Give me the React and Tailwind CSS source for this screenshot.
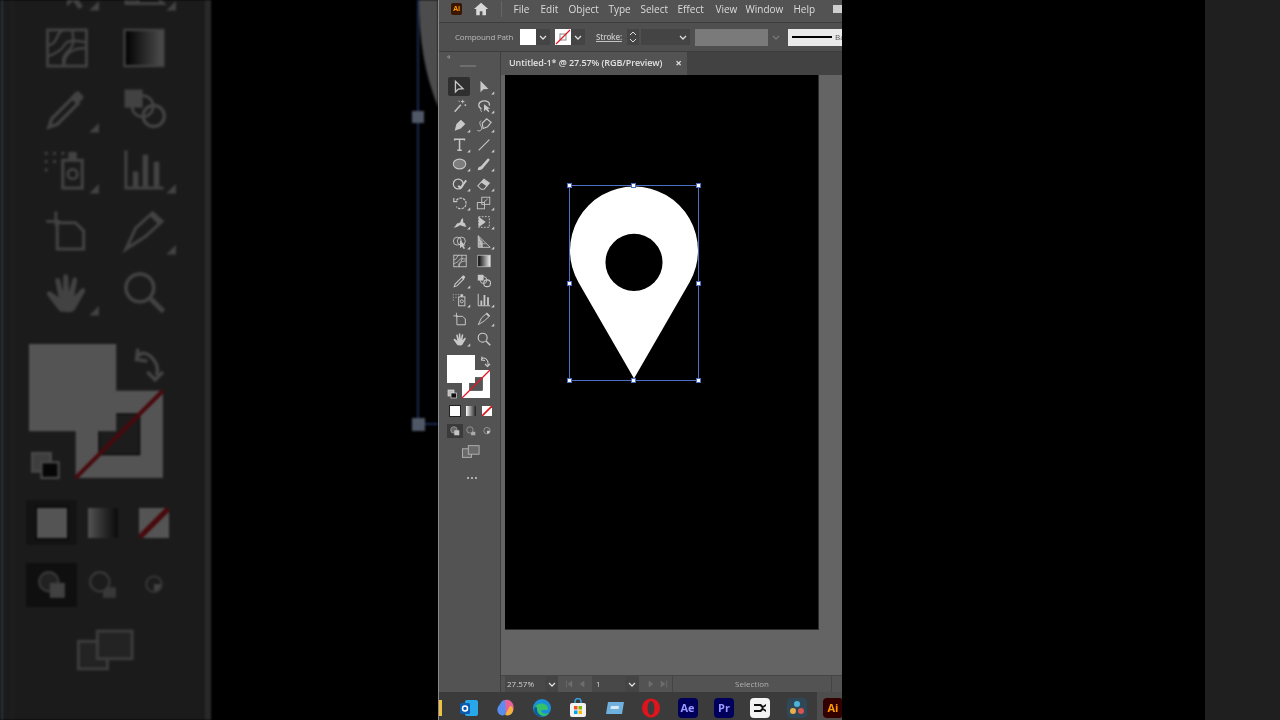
import React from 'react';

const Corner = () => <path d="M20.500 14v3.500H17z" fill="currentColor" stroke="none" />;

// tool icons, drawn on an 18x18 box
const icons = {
  select: <path d="M5 2.500v12l3.200-3.200 5.300-.4z" fill="none" strokeWidth="1.500" />,
  direct: <><path d="M5 2v13l3.400-3.400 5.600-.3z" fill="currentColor" stroke="none" /><Corner /></>,
  wand: <><path d="M3 15.500 10 7.500" strokeWidth="1.600" /><path d="M12 2v4M10 4h4M15 7v2M14 8h2M8 3v1.500" strokeWidth="1" /></>,
  lasso: <><path d="M6 12C2 10 2 5 7 3.500c5-1 9 1 8 5" fill="none" strokeWidth="1.400" /><path d="M6 12c-1 1-1 3 .5 3.500" fill="none" /><path d="M9 7v8l2-2 3 3 1-1-2-3h3z" fill="currentColor" stroke="none" /><Corner /></>,
  pen: <><path d="M3 15.500 5 8l5-5 5 5-5 5z" fill="currentColor" stroke="none" /><Corner /></>,
  curve: <><path d="M1.500 15c3 2 6-1 4.500-4S3 6 6 4" fill="none" /><path d="M8 13 7 7l5-5 5 4-4 5z" fill="none" strokeWidth="1.300" /><Corner /></>,
  type: <><path d="M3 4V2.500h11V4M8.500 2.500V15M6 15h5" fill="none" strokeWidth="1.700" /><Corner /></>,
  line: <><path d="M3 15 15 3" strokeWidth="1.200" /><Corner /></>,
  ellipse: <><ellipse cx="8.500" cy="9" rx="7" ry="5.500" fill="#7d7d7d" strokeWidth="1.200" /><Corner /></>,
  brush: <><path d="M2 16c0-3 1-4 3.500-4.500L13 3c1-1 3 .5 2 2l-7 8.500C7 15.500 5 16 2 16z" fill="currentColor" stroke="none" /><Corner /></>,
  shaper: <><circle cx="7" cy="9" r="5.500" fill="none" strokeWidth="1.400" /><path d="M7 11l2.500 2.500L16 5" fill="none" strokeWidth="2.200" /><Corner /></>,
  eraser: <><path d="m2 11 7-7.500 6 4.500-6 7H6z" fill="none" strokeWidth="1.200" /><path d="m8.500 4 6.500 4-3 3.500-6.500-4.500z" fill="currentColor" stroke="none" /><Corner /></>,
  rotate: <><path d="M5 6A6 6 0 1 1 5 13" fill="none" strokeDasharray="3 1" strokeWidth="1.300" /><path d="M2 3.500v4h4" fill="none" strokeWidth="1.300" /><Corner /></>,
  scale: <><rect x="1.500" y="8.500" width="8" height="7" fill="none" /><rect x="6.500" y="2.500" width="9" height="8" fill="none" /><path d="m9 8 4-3.500" /><Corner /></>,
  warp: <><path d="M1.500 15c3-1 3-5 6-5s2-4 4-5 0 5 2 5 1 3 3 4c-5 1-6-2-8-1s-4 3-7 2z" fill="currentColor" stroke="none" /><Corner /></>,
  free: <><path d="M3 3h12v12H3z" fill="none" strokeDasharray="2 1.500" /><path d="M3 3 11 9l-8 6z" fill="currentColor" stroke="none" /><Corner /></>,
  builder: <><circle cx="6" cy="8" r="4.500" fill="none" /><circle cx="10.500" cy="8" r="4.500" fill="none" /><path d="M9 7v9l2.200-2 2 3 1.500-1-2-3H15z" fill="currentColor" stroke="none" /><Corner /></>,
  perspective: <><path d="M2.500 2v13H16L2.500 2z" fill="none" /><path d="M2.500 7 7 8.500V15M2.500 11H11M2.500 2 7 15" fill="none" strokeWidth=".8" /><path d="M2.500 2 7 8.500V15H2.500z" fill="currentColor" stroke="none" opacity=".7" /><Corner /></>,
  mesh: <><rect x="2" y="2.500" width="14" height="13" fill="none" /><path d="M2 8c4 0 3-5.500 6-5.500M8 15c0-4 3-6 8-6M2 12c3-1 5-2 6-4s4-2 8-1M11 2.500c0 3 1 5-1 7s-3 3-2 6" fill="none" strokeWidth=".9" /></>,
  gradient: <><defs><linearGradient id="toolgrad"><stop offset="0" stopColor="#000" /><stop offset="1" stopColor="#eee" /></linearGradient></defs><rect x="2" y="2.500" width="14" height="13" fill="url(#toolgrad)" strokeWidth=".8" /></>,
  dropper: <><path d="m2.500 15.500 1-3L11 5l2 2-7.500 7.500z" fill="none" strokeWidth="1.200" /><path d="m10.500 4.500 1.500-1.500 1-.5 2 2-.5 1-1.500 1.500z" fill="currentColor" stroke="none" /><Corner /></>,
  blend: <><rect x="2" y="2" width="6.500" height="6.500" fill="currentColor" stroke="none" /><circle cx="8.500" cy="8" r="3.800" fill="none" /><circle cx="12.500" cy="11.500" r="3.800" fill="none" strokeWidth="1.200" /></>,
  spray: <><path d="M1 3h1M4 3h1M7 3h1M1 6h1M4 6h1M1 9h1" strokeWidth="1" /><rect x="7.500" y="5.500" width="7" height="10" fill="none" strokeWidth="1.100" /><rect x="9.500" y="2.500" width="3" height="3" fill="currentColor" stroke="none" /><circle cx="11" cy="10.500" r="1.700" fill="none" /><Corner /></>,
  graph: <><path d="M2.500 2v13.500H16" fill="none" strokeWidth="1.100" /><path d="M6 15V9.500M9.500 15V3.500M13.500 15V6" strokeWidth="2" fill="none" /><Corner /></>,
  artboard: <><path d="M1.500 5.500h5M5 2v5" fill="none" /><path d="M5.500 6H12l3 3v6.500H5.500z" fill="none" strokeWidth="1.100" /></>,
  slice: <><path d="M2.500 15.500 6 8l6-5.500 3.500 3-6 5.500z" fill="none" strokeWidth="1.100" /><path d="m11 3.500 1.500-1.500 3 3L14 6.500z" fill="currentColor" stroke="none" /><Corner /></>,
  hand: <><path d="M6.500 16C5 14.500 3.500 12 2 10.300c-.8-1 .5-2 1.500-1.200L6 11 4.800 5c-.2-1.200 1.400-1.500 1.700-.3L7.600 9 7.700 3.500c0-1.200 1.700-1.200 1.700 0L9.700 9 11 4.500c.3-1.200 1.900-.8 1.600.4L11.600 10.500 14 8c.9-.9 2 .1 1.300 1.200L12 15c-.5 1-1.500 1.300-2.500 1.300z" fill="currentColor" stroke="none" /><Corner /></>,
  zoom: <><circle cx="7.500" cy="7.500" r="5" fill="none" strokeWidth="1.300" /><path d="m11.500 11.500 4.500 4.500" strokeWidth="1.800" /></>,
};

const rows = [
  ['select', 'direct'], ['wand', 'lasso'], ['pen', 'curve'], ['type', 'line'], ['ellipse', 'brush'],
  ['shaper', 'eraser'], ['rotate', 'scale'], ['warp', 'free'], ['builder', 'perspective'], ['mesh', 'gradient'],
  ['dropper', 'blend'], ['spray', 'graph'], ['artboard', 'slice'], ['hand', 'zoom'],
];

const Tool = ({ name, className }) => (
  <svg viewBox="0 0 18 18" stroke="currentColor" strokeWidth="1" className={`overflow-visible ${className}`}>{icons[name]}</svg>
);

const FillStroke = ({ className }) => (
  <svg viewBox="0 0 44 44" className={className}>
    <rect x="15" y="15" width="28" height="28" fill="#fff" />
    <rect x="22.500" y="22.500" width="13" height="13" fill="#555" stroke="#222" strokeWidth=".5" />
    <path d="M15 43 43 15" stroke="#dd1a25" strokeWidth="1.300" />
    <rect x="0" y="0" width="28" height="28" fill="#fff" />
    <path d="M35 4c1-1.500 3-1.500 5 1 1.500 2 1.500 3.500 1 5M35 1.500 34.500 5l3.500 .5M38 9l2.500 2.500L43 9" fill="none" stroke="#ccc" strokeWidth="1.100" />
    <rect x="1" y="35" width="6" height="6" fill="#bbb" stroke="#ddd" strokeWidth=".7" />
    <rect x="4" y="38" width="5.500" height="5" fill="#111" stroke="#ddd" strokeWidth=".7" />
  </svg>
);

const NoneSwatch = ({ className }) => (
  <svg viewBox="0 0 14 14" className={className}>
    <rect width="14" height="14" fill="#fff" />
    <path d="M0 14 14 0" stroke="#dd1a25" strokeWidth="2.500" />
  </svg>
);

const DrawMode = ({ kind, className }) => (
  <svg viewBox="0 0 14 14" className={className}>
    {kind === 'normal' && <><circle cx="5.500" cy="5.500" r="4.500" fill="#666" stroke="#aaa" /><rect x="6" y="6" width="7" height="7" fill="#c4c4c4" /></>}
    {kind === 'behind' && <><circle cx="5.500" cy="5.500" r="4.500" fill="#555" stroke="#aaa" /><path d="M9 8h4v5H7v-3z" fill="#aaa" /></>}
    {kind === 'inside' && <><circle cx="7" cy="6.500" r="4.500" fill="#555" stroke="#aaa" /><path d="M7 6.500h4a4 4 0 0 1-4 4z" fill="#ccc" /></>}
  </svg>
);

const ScreenMode = ({ className }) => (
  <svg viewBox="0 0 20 14" fill="#6a6a6a" stroke="#b5b5b5" className={className}>
    <rect x=".5" y="4" width="10" height="9.500" />
    <rect x="7" y=".5" width="12" height="9.500" />
  </svg>
);

// same panel is shown twice: normal size in the app, and magnified + dimmed on the left
const Toolbar = () => (
  <aside className="w-[60px] shrink-0 bg-[#535353] border-r border-[#3f3f3f] text-[#c8c8c8] flex flex-col pl-[6px]">
    <div className="h-[25px] shrink-0 relative">
      <span className="block text-[7px] leading-[8px] text-[#bbb] mt-[1px]">«</span>
      <div className="w-[16px] h-[2px] bg-[#6e6e6e] mx-auto mt-[4px] mr-[24px]" />
    </div>
    <div className="grid grid-cols-[25px_24px] auto-rows-[19.4px]">
      {rows.flat().map((name) => (
        <div key={name} className={`flex items-center justify-center ${name === 'select' ? 'bg-[#2f2f2f] rounded-[2px] w-[22px] ml-[1px]' : ''}`}>
          <Tool name={name} className="w-[16px] h-[16px]" />
        </div>
      ))}
    </div>
    <FillStroke className="w-[44px] h-[44px] mt-[7px]" />
    <div className="flex mt-[5px] h-[14px] items-center">
      <div className="w-[16px] flex justify-center"><div className="w-[10px] h-[10px] bg-white outline outline-[#222]" /></div>
      <div className="w-[16px] flex justify-center"><div className="w-[10px] h-[10px] bg-linear-to-r from-white to-[#222]" /></div>
      <div className="w-[16px] flex justify-center"><NoneSwatch className="w-[10px] h-[10px]" /></div>
    </div>
    <div className="flex mt-[6px] h-[14px] items-center">
      <div className="w-[16px] h-[14px] bg-[#3a3a3a] flex justify-center items-center"><DrawMode kind="normal" className="w-[10px] h-[10px]" /></div>
      <div className="w-[16px] flex justify-center"><DrawMode kind="behind" className="w-[10px] h-[10px]" /></div>
      <div className="w-[16px] flex justify-center"><DrawMode kind="inside" className="w-[10px] h-[10px]" /></div>
    </div>
    <ScreenMode className="w-[18px] h-[13px] mt-[7px] ml-[15px]" />
    <div className="flex gap-[2px] ml-[20px] mt-[19px]">
      <span className="w-[2px] h-[2px] rounded-full bg-[#ccc]" />
      <span className="w-[2px] h-[2px] rounded-full bg-[#ccc]" />
      <span className="w-[2px] h-[2px] rounded-full bg-[#ccc]" />
    </div>
  </aside>
);

const MagnifiedPanel = () => (
  <div className="w-[211px] h-full shrink-0 bg-[#535353] brightness-[0.33] blur-[1px] overflow-hidden flex">
    <div className="w-[3px] bg-[#7f8e9c] shrink-0" />
    <div className="w-[10px] shrink-0 border-r border-[#666]" />
    <div className="w-[192px] shrink-0 pl-[15px] text-[#c8c8c8]">
      <div className="grid grid-cols-[77px_77px] auto-rows-[61px] -mt-[44px]">
        {rows.slice(8).flat().map((name) => (
          <div key={name} className="flex items-center justify-center">
            <Tool name={name} className="w-[50px] h-[50px]" />
          </div>
        ))}
      </div>
      <FillStroke className="w-[137px] h-[137px] mt-[22px] ml-[1px]" />
      <div className="flex mt-[19px] -ml-[2px] h-[45px] items-center">
        <div className="w-[51px] h-[45px] flex justify-center items-center bg-[#3a3a3a]"><div className="w-[30px] h-[30px] bg-white outline-2 outline-[#222]" /></div>
        <div className="w-[51px] flex justify-center"><div className="w-[30px] h-[30px] bg-linear-to-r from-white to-[#222]" /></div>
        <div className="w-[51px] flex justify-center"><NoneSwatch className="w-[30px] h-[30px]" /></div>
      </div>
      <div className="flex mt-[18px] -ml-[2px] h-[44px] items-center">
        <div className="w-[51px] h-[44px] flex justify-center items-center bg-[#2c2c2c]"><DrawMode kind="normal" className="w-[30px] h-[30px]" /></div>
        <div className="w-[51px] flex justify-center"><DrawMode kind="behind" className="w-[30px] h-[30px]" /></div>
        <div className="w-[51px] flex justify-center"><DrawMode kind="inside" className="w-[24px] h-[24px]" /></div>
      </div>
      <ScreenMode className="w-[58px] h-[42px] mt-[22px] ml-[49px]" />
    </div>
    <div className="w-[6px] shrink-0 bg-[#7c7c7c]" />
  </div>
);

// edge of the magnified pin, cropped by the app window
const PinEdge = () => (
  <svg viewBox="0 0 227 720" className="w-[227px] h-full shrink-0 blur-[1px]">
    <path d="M208 0C208 40 214 75 227 107V0z" fill="#4c4c4c" />
    <path d="M207 0V424H227" fill="none" stroke="#1b2a52" strokeWidth="2" />
    <rect x="201" y="111" width="12" height="12" fill="#505868" />
    <rect x="201" y="418" width="13" height="13" fill="#505868" />
  </svg>
);

const Chevron = ({ className = 'w-[14px]', dim }) => (
  <div className={`${className} h-[16px] bg-[#444] flex items-center justify-center`}>
    <svg viewBox="0 0 8 5" className="w-[8px] h-[5px]"><path d="m1 1 3 3 3-3" fill="none" stroke={dim ? '#777' : '#ddd'} strokeWidth="1.300" /></svg>
  </div>
);

const MenuBar = () => (
  <div className="h-[22px] shrink-0 flex items-center bg-[#535353] pl-[12px] pb-[4px] text-[10px] text-[#dcdcdc]">
    <div className="w-[12px] h-[12px] rounded-[2px] bg-[#3a1500] flex items-center justify-center text-[7px] font-bold text-[#ff9a00]">Ai</div>
    <svg viewBox="0 0 16 14" className="w-[15px] h-[14px] ml-[12px]" fill="#d8d8d8"><path d="M8 0 0 7h2.500v7H6.500V9.500h3V14h4V7H16z" /></svg>
    <div className="w-px h-[16px] bg-[#666] ml-[12px] mr-[12px]" />
    <div className="flex">
      <span className="w-[27px]">File</span>
      <span className="w-[28px]">Edit</span>
      <span className="w-[40px]">Object</span>
      <span className="w-[32px]">Type</span>
      <span className="w-[37px]">Select</span>
      <span className="w-[38px]">Effect</span>
      <span className="w-[30px]">View</span>
      <span className="w-[48px]">Window</span>
      <span className="w-[29px]">Help</span>
    </div>
    <div className="w-[9px] h-[8px] bg-[#cfcfcf] ml-[11px]" />
  </div>
);

const ControlBar = () => (
  <div className="h-[29px] shrink-0 flex items-center bg-[#4f4f4f] border-t border-[#3c3c3c] pl-[16px] text-[8px] text-[#b9b9b9]">
    <span className="w-[65px] tracking-[-0.2px]">Compound Path</span>
    <div className="w-[16px] h-[16px] bg-white" />
    <Chevron />
    <svg viewBox="0 0 16 16" className="w-[16px] h-[16px] ml-[5px]"><rect width="16" height="16" fill="#fff" /><rect x="5" y="5" width="6" height="6" fill="none" stroke="#888" /><path d="M1 15 15 1" stroke="#dd1a25" strokeWidth="1.300" /></svg>
    <Chevron />
    <span className="ml-[11px] w-[31px] font-semibold tracking-[-0.2px] text-[#c4c4c4] underline">Stroke:</span>
    <svg viewBox="0 0 12 16" className="w-[12px] h-[16px] bg-[#444]"><path d="m3 6 3-3 3 3M3 10l3 3 3-3" fill="none" stroke="#ddd" /></svg>
    <div className="w-[35px] h-[16px] bg-[#444] ml-[2px]" />
    <Chevron />
    <div className="w-[73px] h-[17px] bg-[#7a7a7a] ml-[5px]" />
    <svg viewBox="0 0 8 5" className="w-[8px] h-[5px] ml-[4px]"><path d="m1 1 3 3 3-3" fill="none" stroke="#777" strokeWidth="1.300" /></svg>
    <div className="flex-1 h-[17px] bg-[#e9e9e9] ml-[8px] flex items-center pl-[4px] overflow-hidden">
      <div className="w-[40px] h-[2px] bg-black shrink-0" />
      <span className="ml-[3px] text-[#555]">Ba</span>
    </div>
  </div>
);

const Selection = () => {
  const handle = 'absolute w-[5px] h-[5px] bg-white border border-[#4f6fc4]';
  return (
    <div className="relative w-[130px] h-[196px] border border-[#4f6fc4]">
      <svg viewBox="0 0 130 196" className="w-full h-full">
        <path fillRule="evenodd" fill="#fff" d="M65 195 8.700 97.500A65 65 0 1 1 121.300 97.500zM65 48a29 29 0 1 0 0 58 29 29 0 0 0 0-58z" />
      </svg>
      <span className={`${handle} -left-[3px] -top-[3px]`} />
      <span className={`${handle} left-[61px] -top-[3px]`} />
      <span className={`${handle} -right-[3px] -top-[3px]`} />
      <span className={`${handle} -left-[3px] top-[95px]`} />
      <span className={`${handle} -right-[3px] top-[95px]`} />
      <span className={`${handle} -left-[3px] -bottom-[3px]`} />
      <span className={`${handle} left-[61px] -bottom-[3px]`} />
      <span className={`${handle} -right-[3px] -bottom-[3px]`} />
    </div>
  );
};

const Navigator = ({ d }) => (
  <svg viewBox="0 0 10 8" className="w-[9px] h-[8px] text-[#6d6d6d]"><path d={d} fill="currentColor" /></svg>
);

const StatusBar = () => (
  <div className="h-[17px] shrink-0 flex items-center bg-[#535353] border-t border-[#444] pl-[4px] text-[8px] text-[#d0d0d0]">
    <div className="w-[40px] h-[16px] bg-[#484848] pl-[2px] leading-[16px]">27.57%</div>
    <Chevron className="w-[13px]" />
    <div className="flex gap-[4px] ml-[7px]">
      <Navigator d="M1 0h1v8H1zM8 0v8L3 4z" />
      <Navigator d="M7 0v8L2 4z" />
    </div>
    <div className="w-[33px] h-[16px] bg-[#484848] ml-[5px] pl-[4px] leading-[16px]">1</div>
    <Chevron />
    <div className="flex gap-[4px] ml-[7px]">
      <Navigator d="M3 0v8l5-4z" />
      <Navigator d="M2 0v8l5-4zM8 0h1v8H8z" />
    </div>
    <div className="ml-[4px] w-[160px] h-full border-x border-[#444] text-center leading-[16px] text-[#b0b0b0]">Selection</div>
  </div>
);

const Taskbar = () => (
  <div className="h-[28px] shrink-0 flex items-center bg-[#3b3b3b] relative pt-[4px]">
    <div className="w-[3px] h-[16px] bg-[#f0c040] shrink-0" />
    <div className="flex items-center pl-[9px]">
      <div className="w-[36.400px] flex justify-center">
        <svg viewBox="0 0 20 20" className="w-[20px] h-[20px]"><rect x="6" y="2" width="13" height="16" rx="2" fill="#28a8ea" /><rect x="1" y="5" width="10" height="11" rx="1.500" fill="#0a5cb0" /><circle cx="6" cy="10.500" r="2.500" fill="none" stroke="#fff" strokeWidth="1.500" /></svg>
      </div>
      <div className="w-[36.400px] flex justify-center">
        <svg viewBox="0 0 20 20" className="w-[20px] h-[20px]"><path d="M6 3c3-2 5-1 6 2l-2 10c-1 3-5 3-7 1-2-2-2-5-1-7z" fill="#5a8df0" /><path d="M9 2c3-1 6 0 8 4 1 3 1 6-1 9-2 2-5 2-6 1z" fill="#e8639a" /><path d="M14 8c3 0 4 4 2 7-1 2-4 3-7 2z" fill="#f3b33d" /></svg>
      </div>
      <div className="w-[36.400px] flex justify-center">
        <svg viewBox="0 0 20 20" className="w-[20px] h-[20px]"><circle cx="10" cy="10" r="9" fill="#1a8fd8" /><path d="M2 11c1-5 8-7 12-4 2 1.500 3 4 1 5H9c0 3 4 5 8 3-3 4-8 4-11 2-3-2-4-4-4-6z" fill="#35c06a" /><path d="M5 11c0 4 3 7 7 7-4 2-10-1-10-7 1-3 3-3 3 0z" fill="#0c5aa8" /></svg>
      </div>
      <div className="w-[36.400px] flex justify-center">
        <svg viewBox="0 0 20 20" className="w-[20px] h-[20px]"><path d="M7 5V3.500a3 3 0 0 1 6 0V5" fill="none" stroke="#3aa0e0" strokeWidth="1.500" /><rect x="2" y="5" width="16" height="14" rx="2" fill="#f2f2f2" /><rect x="6" y="8" width="3.500" height="3.500" fill="#f25022" /><rect x="10.500" y="8" width="3.500" height="3.500" fill="#7fba00" /><rect x="6" y="12.500" width="3.500" height="3.500" fill="#00a4ef" /><rect x="10.500" y="12.500" width="3.500" height="3.500" fill="#ffb900" /></svg>
      </div>
      <div className="w-[36.400px] flex justify-center">
        <svg viewBox="0 0 20 20" className="w-[20px] h-[20px]"><path d="M3 4h16l-2 12H1z" fill="#6fb1dc" /><path d="M6 8h8l-.5 3h-8z" fill="#d6e9f5" /></svg>
      </div>
      <div className="w-[36.400px] flex justify-center">
        <svg viewBox="0 0 20 20" className="w-[20px] h-[20px]"><ellipse cx="10" cy="10" rx="9" ry="9.500" fill="#e0141d" /><ellipse cx="10" cy="10" rx="3.500" ry="7" fill="#3b3b3b" /></svg>
      </div>
      <div className="w-[36.400px] flex justify-center">
        <div className="w-[20px] h-[20px] rounded-[4px] bg-[#00005b] text-[#9999ff] text-[11px] font-bold leading-[20px] text-center">Ae</div>
      </div>
      <div className="w-[36.400px] flex justify-center">
        <div className="w-[20px] h-[20px] rounded-[4px] bg-[#00005b] text-[#9999ff] text-[11px] font-bold leading-[20px] text-center">Pr</div>
      </div>
      <div className="w-[36.400px] flex justify-center">
        <svg viewBox="0 0 20 20" className="w-[20px] h-[20px]"><rect width="20" height="20" rx="4" fill="#f4f4f4" /><path d="M4 6h7l2 2 3-2v2l-3 2 3 2v2l-3-2-2 2H4v-2h6l2-2-2-2H4z" fill="#111" /></svg>
      </div>
      <div className="w-[36.400px] flex justify-center">
        <svg viewBox="0 0 20 20" className="w-[20px] h-[20px]"><rect width="20" height="20" rx="4" fill="#2f4858" /><circle cx="10" cy="6" r="3" fill="#4fb3d9" /><circle cx="6" cy="13" r="3" fill="#e8b04a" /><circle cx="14" cy="13" r="3" fill="#d9534f" /></svg>
      </div>
    </div>
    <div className="absolute left-[378px] right-0 top-0 h-full bg-[#4d4d4d] flex items-center pl-[6px] pt-[4px]">
      <div className="w-[20px] h-[20px] rounded-[4px] bg-[#330000] text-[#ff9a00] text-[11px] font-bold leading-[20px] text-center shrink-0">Ai</div>
    </div>
  </div>
);

export default function App() {
  return (
    <div className="flex w-[1280px] h-[720px] overflow-hidden bg-black font-['Open_Sans',sans-serif]">
      <MagnifiedPanel />
      <PinEdge />

      <div className="w-[404px] shrink-0 h-full flex flex-col bg-[#535353] border-l border-[#8a8a8a] blur-[0.5px] overflow-hidden">
        <MenuBar />
        <ControlBar />
        <div className="flex-1 min-h-0 flex pl-[2px] border-t border-[#3c3c3c]">
          <Toolbar />
          <div className="flex-1 min-w-0 flex flex-col">
            <div className="h-[23px] shrink-0 bg-[#424242] flex">
              <div className="w-[186px] bg-[#535353] flex items-center pl-[8px] pb-[2px] text-[9px] font-semibold tracking-[-0.08px] text-[#e2e2e2]">
                <span>Untitled-1* @ 27.57% (RGB/Preview)</span>
                <span className="ml-[13px] font-bold text-[11px] leading-none">×</span>
              </div>
            </div>
            <div className="flex-1 min-h-0 bg-[#646464] pl-[4px]">
              <div className="w-[314px] h-[555px] bg-black border-r border-b border-[#2e2e2e] pt-[110px] pl-[64px]">
                <Selection />
              </div>
            </div>
            <StatusBar />
          </div>
        </div>
        <Taskbar />
      </div>

      <div className="w-[363px] shrink-0" />
      <div className="flex-1 bg-[#1f1f1f]" />
    </div>
  );
}
